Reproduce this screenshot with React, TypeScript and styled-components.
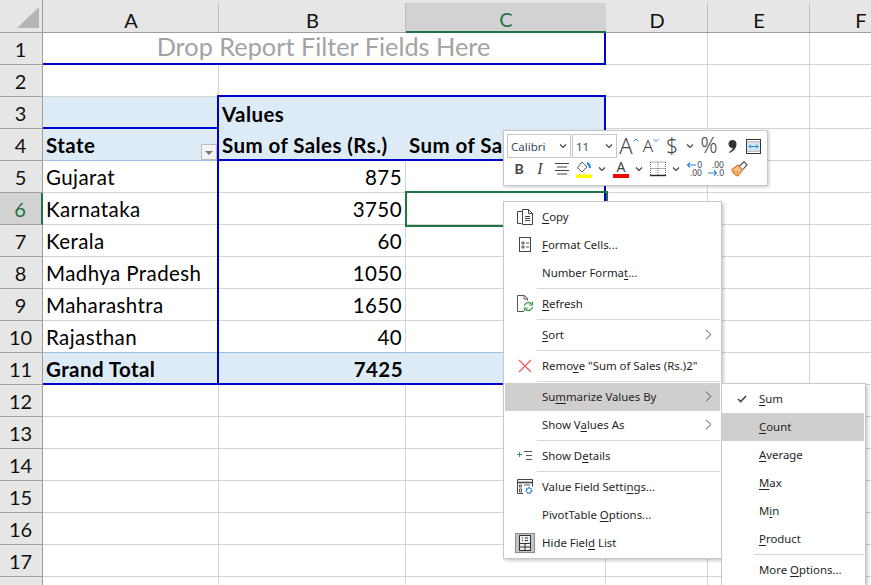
import React from "react"
import styled, { createGlobalStyle } from "styled-components"

const GlobalStyle = createGlobalStyle`
  html, body { margin: 0; padding: 0; background: #fff; }
  body { font-family: "Lato", "Liberation Sans", sans-serif; }
`

const BLUE = "#0000cc"
const GREEN = "#217346"
const GRID = "#d4d4d4"
const HEAD_LINE = "#9f9f9f"
const PIVOT = "#ddebf7"
const PIVOT_LINE = "#9bc2e6"

const Page = styled.div`
  position: relative;
  width: 871px;
  height: 585px;
  overflow: hidden;
  background: #fff;
`
const Sheet = styled.div`
  display: grid;
  grid-template-columns: 43px 176px 187px 200px 102px 102px 102px;
  grid-template-rows: 33px repeat(18, 32px);
`
const CornerCell = styled.div`
  background: #e6e6e6;
  border-right: 1px solid ${HEAD_LINE};
  border-bottom: 1px solid ${HEAD_LINE};
  svg { display: block; margin: 7px 0 0 17px; }
`
const ColHead = styled.div<{ $active?: boolean }>`
  display: flex;
  align-items: center;
  justify-content: center;
  padding-top: 7px;
  box-sizing: border-box;
  font-size: 20px;
  color: ${(p) => (p.$active ? GREEN : "#111")};
  background: ${(p) =>
    p.$active
      ? "linear-gradient(#e6e6e6 0 3px, #d2d2d2 3px)"
      : "#e6e6e6"};
  border-bottom: ${(p) => (p.$active ? `2px solid ${GREEN}` : `1px solid ${HEAD_LINE}`)};
  position: relative;
  &::after {
    content: "";
    position: absolute;
    right: 0;
    top: 3px;
    bottom: 0;
    width: 1px;
    background: ${(p) => (p.$active ? "#d2d2d2" : "#bcbcbc")};
  }
`
const RowHead = styled.div<{ $active?: boolean }>`
  display: flex;
  align-items: center;
  justify-content: center;
  box-sizing: border-box;
  padding-right: 1px;
  font-size: 20px;
  color: ${(p) => (p.$active ? GREEN : "#111")};
  background: ${(p) => (p.$active ? "#d2d2d2" : "#e6e6e6")};
  border-right: ${(p) => (p.$active ? `2px solid ${GREEN}` : `1px solid ${HEAD_LINE}`)};
  border-bottom: 1px solid ${HEAD_LINE};
`
const Cell = styled.div<{
  $bold?: boolean
  $right?: boolean
  $fill?: boolean
  $edge?: boolean
  $open?: boolean
  $bottomLine?: string
}>`
  position: relative;
  display: flex;
  align-items: center;
  box-sizing: border-box;
  white-space: nowrap;
  padding: 1px 3px 0 3px;
  font-size: 20.5px;
  letter-spacing: 0.42px;
  color: #000;
  font-weight: ${(p) => (p.$bold ? 700 : 400)};
  justify-content: ${(p) => (p.$right ? "flex-end" : "flex-start")};
  background: ${(p) => (p.$fill ? PIVOT : "#fff")};
  border-right: ${(p) => (p.$edge || p.$open ? "none" : `1px solid ${GRID}`)};
  border-bottom: ${(p) => p.$bottomLine ?? `1px solid ${GRID}`};
  ${(p) =>
    p.$edge
      ? `&::after {
          content: "";
          position: absolute;
          right: 0;
          top: -2px;
          bottom: -2px;
          width: 2px;
          background: ${BLUE};
        }`
      : ""}
`
const FilterDrop = styled.div`
  grid-column: span 3;
  display: flex;
  align-items: center;
  justify-content: center;
  box-sizing: border-box;
  padding-bottom: 5px;
  font-size: 25.3px;
  color: #a3a3a3;
  border-right: 2px solid ${BLUE};
  border-bottom: 2px solid ${BLUE};
`
const CellSelection = styled.div`
  position: absolute;
  left: -1px;
  top: -2px;
  width: 199px;
  height: 32px;
  border: 2px solid ${GREEN};
  z-index: 1;
`
const FilterButton = styled.div`
  position: absolute;
  right: 2px;
  bottom: 0;
  width: 16px;
  height: 16px;
  box-sizing: border-box;
  background: #f3f3f3;
  border: 1px solid #bdbdbd;
  display: flex;
  align-items: center;
  justify-content: center;
  z-index: 1;
  &::after {
    content: "";
    border-left: 4px solid transparent;
    border-right: 4px solid transparent;
    border-top: 4px solid #7a7a7a;
    margin-top: 2px;
  }
`

/* mini toolbar */
const MiniBar = styled.div`
  position: absolute;
  left: 503px;
  top: 130px;
  width: 265px;
  height: 56px;
  box-sizing: border-box;
  padding: 3px;
  background: #fff;
  border: 1px solid #c6c6c6;
  box-shadow: 1px 1px 3px rgba(0, 0, 0, 0.22);
  z-index: 5;
  font-family: "Noto Sans", "Open Sans", sans-serif;
  color: #3f3f3f;
`
const BarRow = styled.div`
  display: flex;
  align-items: center;
  height: 24px;
`
const IconRow = styled(BarRow)`
  margin-top: -1px;
`
const Combo = styled.div<{ $w: number; $gap?: number }>`
  width: ${(p) => p.$w}px;
  height: 24px;
  box-sizing: border-box;
  margin-right: ${(p) => p.$gap ?? 0}px;
  border: 1px solid #c6c6c6;
  display: flex;
  align-items: center;
  justify-content: space-between;
  padding: 0 3px;
  font-size: 11.5px;
  color: #3b4a5a;
`
const Slot = styled.div<{ $w: number; $size?: number }>`
  width: ${(p) => p.$w}px;
  height: 24px;
  flex: none;
  display: flex;
  align-items: center;
  justify-content: center;
  font-family: "Lato", sans-serif;
  font-size: ${(p) => p.$size ?? 14}px;
  line-height: 1;
  color: #444;
`
const GrowLetter = styled.span`
  font-family: "Noto Sans", sans-serif;
  font-weight: 300;
  margin-top: -2px;
`
const Notch = styled.svg`
  align-self: flex-start;
  margin-top: 4px;
`
const ItalicI = styled.span`
  font-family: "Liberation Serif", serif;
  font-style: italic;
  font-size: 16px;
`
const ColorLetter = styled.div<{ $bar: string }>`
  width: 16px;
  height: 18px;
  box-sizing: border-box;
  border-bottom: 4px solid ${(p) => p.$bar};
  text-align: center;
  font-family: "Noto Sans", sans-serif;
  font-size: 14px;
  line-height: 14px;
  color: #444;
`
const DecimalIcon = styled.svg`
  overflow: visible;
  text {
    font-family: "Noto Sans", sans-serif;
    font-size: 8.5px;
    fill: #444;
    text-anchor: end;
  }
`
const Caret = () => (
  <svg width="8" height="6" viewBox="0 0 8 6">
    <path d="M1 1.5 4 4.5 7 1.5" fill="none" stroke="#444" strokeWidth="1.2" />
  </svg>
)

/* context menus */
const Menu = styled.div`
  position: absolute;
  left: 503px;
  top: 201px;
  width: 219px;
  box-sizing: border-box;
  padding: 1px;
  background: #fff;
  border: 1px solid #c8c8c8;
  box-shadow: 2px 2px 3px rgba(0, 0, 0, 0.2);
  z-index: 4;
  font-family: "Noto Sans", "Open Sans", sans-serif;
`
const SubMenu = styled(Menu)`
  left: 721px;
  top: 383px;
  width: 145px;
  padding-left: 0;
  z-index: 6;
`
const Item = styled.div<{ $hover?: boolean }>`
  display: flex;
  align-items: center;
  box-sizing: border-box;
  height: 28px;
  padding: 0 8px 2px 0;
  background: ${(p) => (p.$hover ? "#d1cfcd" : "transparent")};
  font-size: 11.4px;
  color: #1f1f1f;
  white-space: nowrap;
  u { text-underline-offset: 2px; text-decoration-thickness: 1px; }
`
const ItemIcon = styled.span`
  width: 30px;
  flex: none;
  margin: 2px 2px 0 5px;
  display: flex;
  align-items: center;
  justify-content: center;
`
const ItemLabel = styled.span`
  flex: 1;
`
const Sep = styled.div`
  height: 1px;
  margin: 1px 0 1px 32px;
  background: #d8d8d8;
`
const IconBox = styled.span`
  width: 20px;
  height: 20px;
  box-sizing: border-box;
  background: #c4c4c4;
  border: 1px solid #8c8c8c;
  display: flex;
  align-items: center;
  justify-content: center;
`
const Chevron = () => (
  <svg width="7" height="11" viewBox="0 0 7 11">
    <path d="M1 .8 6 5.500 1 10.200" fill="none" stroke="#555" strokeWidth="1" />
  </svg>
)

const CopyIcon = () => (
  <svg width="17" height="16" viewBox="0 0 17 16" fill="none" stroke="#444">
    <path d="M5 2.500H.5v12h4" />
    <path d="M5.500 15.500v-15h6l4 4v11z M11.500.5v4h4" fill="#fff" />
    <path d="M8 7.500h5M8 9.500h5M8 11.500h5" />
  </svg>
)
const FormatIcon = () => (
  <svg width="13" height="16" viewBox="0 0 13 16" fill="none" stroke="#444">
    <rect x=".5" y=".5" width="11" height="14" />
    <path d="M3 5h2v2H3zM3 9h2v2H3zM7 6h3M7 10h3" strokeWidth=".9" />
  </svg>
)
const RefreshIcon = () => (
  <svg width="17" height="18" viewBox="0 0 17 18" fill="none">
    <path d="M7 16.500H.5v-16h7l3 3v2" stroke="#555" />
    <path d="M7 .5v3.500h3.500" stroke="#555" />
    <path d="M7.500 10.500a4 4 0 0 1 7-1.500M15.500 12a4 4 0 0 1-7 2" stroke="#3b9c4d" strokeWidth="1.4" />
    <path d="M15.500 6.500v3.500H12M7.500 16v-3h3.200" stroke="#3b9c4d" strokeWidth="1.2" />
  </svg>
)
const RemoveIcon = () => (
  <svg width="14" height="14" viewBox="0 0 14 14">
    <path d="M1 1 13 13M13 1 1 13" stroke="#ef5a5a" strokeWidth="1.2" />
  </svg>
)
const DetailsIcon = () => (
  <svg width="16" height="12" viewBox="0 0 16 12" fill="none">
    <path d="M0 4.500h5M2.500 2v5" stroke="#3b9c4d" />
    <path d="M7 1.500h8M9 5.500h6M9 9.500h6" stroke="#555" />
  </svg>
)
const FieldSettingsIcon = () => (
  <svg width="17" height="16" viewBox="0 0 17 16" fill="none">
    <path d="M6 14.500H.5V.5h15v7" stroke="#444" />
    <path d="M.5 3.500h15" stroke="#444" strokeWidth="1.6" />
    <path d="M2.500 6h2v2h-2zM2.500 10h2v3h-2zM7 6h6" stroke="#444" strokeWidth=".9" />
    <circle cx="12" cy="11.500" r="2.600" stroke="#2b88d8" strokeWidth="1.8" strokeDasharray="1.6 .6" />
    <circle cx="12" cy="11.500" r="1" fill="#fff" />
  </svg>
)
const FieldListIcon = () => (
  <svg width="12" height="16" viewBox="0 0 12 16" fill="none" stroke="#333">
    <rect x=".5" y=".5" width="11" height="15" fill="#eee" />
    <path d="M3 3h1M6 3h3M3 5.500h1M6 5.500h3" strokeWidth="1" />
    <path d="M.5 8.500h11M.5 12h11M6 8.500v7" />
  </svg>
)
const Check = () => (
  <svg width="10" height="8" viewBox="0 0 10 8">
    <path d="M1 4 3.700 6.600 9 1" fill="none" stroke="#444" strokeWidth="1.5" />
  </svg>
)

const Key = styled.u``

type MenuEntry = { icon?: React.ReactNode; label: React.ReactNode; hover?: boolean; sub?: boolean } | "sep"

const mainMenu: MenuEntry[] = [
  { icon: <CopyIcon />, label: <><Key>C</Key>opy</> },
  { icon: <FormatIcon />, label: <><Key>F</Key>ormat Cells...</> },
  { label: <>Number Forma<Key>t</Key>...</> },
  "sep",
  { icon: <RefreshIcon />, label: <><Key>R</Key>efresh</> },
  "sep",
  { label: <><Key>S</Key>ort</>, sub: true },
  "sep",
  { icon: <RemoveIcon />, label: <>Remo<Key>v</Key>e "Sum of Sales (Rs.)2"</> },
  "sep",
  { label: <>Su<Key>m</Key>marize Values By</>, sub: true, hover: true },
  { label: <>Show V<Key>a</Key>lues As</>, sub: true },
  "sep",
  { icon: <DetailsIcon />, label: <>Show D<Key>e</Key>tails</> },
  "sep",
  { icon: <FieldSettingsIcon />, label: <>Value Field Setti<Key>n</Key>gs...</> },
  { label: <>PivotTable <Key>O</Key>ptions...</> },
  { icon: <IconBox><FieldListIcon /></IconBox>, label: <>Hide Fiel<Key>d</Key> List</> },
]

const subMenu: MenuEntry[] = [
  { icon: <Check />, label: <><Key>S</Key>um</> },
  { label: <><Key>C</Key>ount</>, hover: true },
  { label: <><Key>A</Key>verage</> },
  { label: <><Key>M</Key>ax</> },
  { label: <>M<Key>i</Key>n</> },
  { label: <><Key>P</Key>roduct</> },
  "sep",
  { label: <>More <Key>O</Key>ptions...</> },
]

const renderMenu = (entries: MenuEntry[]) =>
  entries.map((e, i) =>
    e === "sep" ? (
      <Sep key={i} />
    ) : (
      <Item key={i} $hover={e.hover}>
        <ItemIcon>{e.icon}</ItemIcon>
        <ItemLabel>{e.label}</ItemLabel>
        {e.sub && <Chevron />}
      </Item>
    )
  )

const states = [
  ["Gujarat", "875"],
  ["Karnataka", "3750"],
  ["Kerala", "60"],
  ["Madhya Pradesh", "1050"],
  ["Maharashtra", "1650"],
  ["Rajasthan", "40"],
]
const cols = ["A", "B", "C", "D", "E", "F"]
const blue = `2px solid ${BLUE}`
const light = `1px solid ${PIVOT_LINE}`

const Blank = () => (
  <>
    <Cell />
    <Cell />
    <Cell />
  </>
)

const App = () => (
  <Page>
    <GlobalStyle />
    <Sheet>
      <CornerCell>
        <svg width="22" height="21" viewBox="0 0 22 21">
          <path d="M22 0V21H0Z" fill="#b5b5b5" />
        </svg>
      </CornerCell>
      {cols.map((c) => (
        <ColHead key={c} $active={c === "C"}>{c}</ColHead>
      ))}

      <RowHead>1</RowHead>
      <FilterDrop>Drop Report Filter Fields Here</FilterDrop>
      <Blank />

      <RowHead>2</RowHead>
      <Cell />
      <Cell $open $bottomLine={blue} />
      <Cell $open $bottomLine={blue} />
      <Blank />

      <RowHead>3</RowHead>
      <Cell $fill $edge $bottomLine={blue} />
      <Cell $fill $bold $open $bottomLine="none">Values</Cell>
      <Cell $fill $edge $bottomLine="none" />
      <Blank />

      <RowHead>4</RowHead>
      <Cell $fill $bold $edge $bottomLine={light}>
        State
        <FilterButton />
      </Cell>
      <Cell $fill $bold $open $bottomLine={blue}>Sum of Sales (Rs.)</Cell>
      <Cell $fill $bold $edge $bottomLine={blue}>Sum of Sales (Rs.)2</Cell>
      <Blank />

      {states.map(([name, sales], i) => {
        const last = i === states.length - 1
        return (
          <React.Fragment key={name}>
            <RowHead $active={i === 1}>{i + 5}</RowHead>
            <Cell $edge $bottomLine={last ? light : undefined}>{name}</Cell>
            <Cell $right $bottomLine={last ? light : undefined}>{sales}</Cell>
            <Cell $edge $bottomLine={last ? light : undefined}>
              {i === 1 && <CellSelection />}
            </Cell>
            <Blank />
          </React.Fragment>
        )
      })}

      <RowHead>11</RowHead>
      <Cell $fill $bold $edge $bottomLine={blue}>Grand Total</Cell>
      <Cell $fill $bold $right $open $bottomLine={blue}>7425</Cell>
      <Cell $fill $edge $bottomLine={blue} />
      <Blank />

      {[12, 13, 14, 15, 16, 17, 18].map((n) => (
        <React.Fragment key={n}>
          <RowHead>{n <= 17 ? n : ""}</RowHead>
          <Cell />
          <Cell />
          <Cell />
          <Blank />
        </React.Fragment>
      ))}
    </Sheet>

    <MiniBar>
      <BarRow>
        <Combo $w={64} $gap={1}>Calibri<Caret /></Combo>
        <Combo $w={45}>11<Caret /></Combo>
        <Slot $w={24} $size={22}>
          <GrowLetter>A</GrowLetter>
          <Notch width="6" height="5" viewBox="0 0 6 5"><path d="M.5 3.500 3 1l2.500 2.500" fill="none" stroke="#2b88d8" /></Notch>
        </Slot>
        <Slot $w={20} $size={17}>
          <GrowLetter>A</GrowLetter>
          <Notch width="6" height="5" viewBox="0 0 6 5"><path d="M.5 1 3 3.500 5.500 1" fill="none" stroke="#2b88d8" /></Notch>
        </Slot>
        <Slot $w={22} $size={21}><GrowLetter>$</GrowLetter></Slot>
        <Slot $w={13}><Caret /></Slot>
        <Slot $w={26} $size={21}><GrowLetter>%</GrowLetter></Slot>
        <Slot $w={20}>
          <svg width="9" height="15" viewBox="0 0 9 14"><path d="M4.500 0.500C7 .5 8.500 2 8.500 4.500 8.500 8.500 5.500 12 1.500 13.500L1 12.500C3 11.500 4.500 10 4.800 8.500 2.500 8.800.5 7 .5 4.500.5 2 2.200.5 4.500.5Z" fill="#333" /></svg>
        </Slot>
        <Slot $w={22}>
          <svg width="15" height="15" viewBox="0 0 15 15" fill="none">
            <rect x=".5" y=".5" width="14" height="14" stroke="#333" />
            <path d="M.5 3h14M.5 12h14" stroke="#8a8a8a" />
            <rect x="1" y="3.500" width="13" height="8" fill="#d6e9f8" />
            <path d="M3 7.500h9M5 5.500l-2 2 2 2M10 5.500l2 2-2 2" stroke="#2b88d8" />
          </svg>
        </Slot>
      </BarRow>
      <IconRow>
        <Slot $w={24} $size={14}><b>B</b></Slot>
        <Slot $w={18}><ItalicI>I</ItalicI></Slot>
        <Slot $w={26}>
          <svg width="14" height="12" viewBox="0 0 14 12"><path d="M0 .5h14M2 4h10M0 7.500h14M2 11h10" stroke="#444" /></svg>
        </Slot>
        <Slot $w={18}>
          <svg width="16" height="17" viewBox="0 0 16 17" fill="none">
            <path d="M6 1 1.500 6.500 6 11l5-5z" stroke="#555" />
            <path d="M11 2c2 1 3 3 3 5" stroke="#2b88d8" strokeWidth="2" />
            <rect y="13.500" width="16" height="3.500" fill="#ffff00" />
          </svg>
        </Slot>
        <Slot $w={17}><Caret /></Slot>
        <Slot $w={22}><ColorLetter $bar="#ff0000">A</ColorLetter></Slot>
        <Slot $w={13}><Caret /></Slot>
        <Slot $w={25}>
          <svg width="16" height="16" viewBox="0 0 16 16" fill="none">
            <path d="M.5 1h15M.5 7.500h15M.5 1v14M8 1v14M15.500 1v14" stroke="#666" strokeDasharray="1 1" />
            <path d="M0 14.500h16" stroke="#222" strokeWidth="1.400" />
          </svg>
        </Slot>
        <Slot $w={11}><Caret /></Slot>
        <Slot $w={27}>
          <DecimalIcon width="17" height="16" viewBox="0 0 17 16">
            <text x="16" y="7">0</text>
            <text x="16" y="15">.00</text>
            <path d="M10 4H1.500M4 1.500 1.500 4 4 6.500" fill="none" stroke="#2b88d8" strokeWidth="1.200" />
          </DecimalIcon>
        </Slot>
        <Slot $w={17}>
          <DecimalIcon width="17" height="16" viewBox="0 0 17 16">
            <text x="16" y="7">.00</text>
            <text x="16" y="15">.0</text>
            <path d="M0 12h8.500M6 9.500 8.500 12 6 14.500" fill="none" stroke="#2b88d8" strokeWidth="1.200" />
          </DecimalIcon>
        </Slot>
        <Slot $w={29}>
          <svg width="17" height="16" viewBox="0 0 17 16" fill="none">
            <path d="M1 8.500 7 4l4.500 5L7 15c-2 0-5-3-6-6.500z" fill="#f6c28e" stroke="#e0761f" strokeWidth="1.200" />
            <path d="M8.500 5 13 .8 16 3.800l-4 4.500" stroke="#555" strokeWidth="1.200" />
            <path d="M4 10 3 12M7 10l-1 3.500" stroke="#e0761f" />
          </svg>
        </Slot>
      </IconRow>
    </MiniBar>

    <Menu>{renderMenu(mainMenu)}</Menu>
    <SubMenu>{renderMenu(subMenu)}</SubMenu>
  </Page>
)

export default App
